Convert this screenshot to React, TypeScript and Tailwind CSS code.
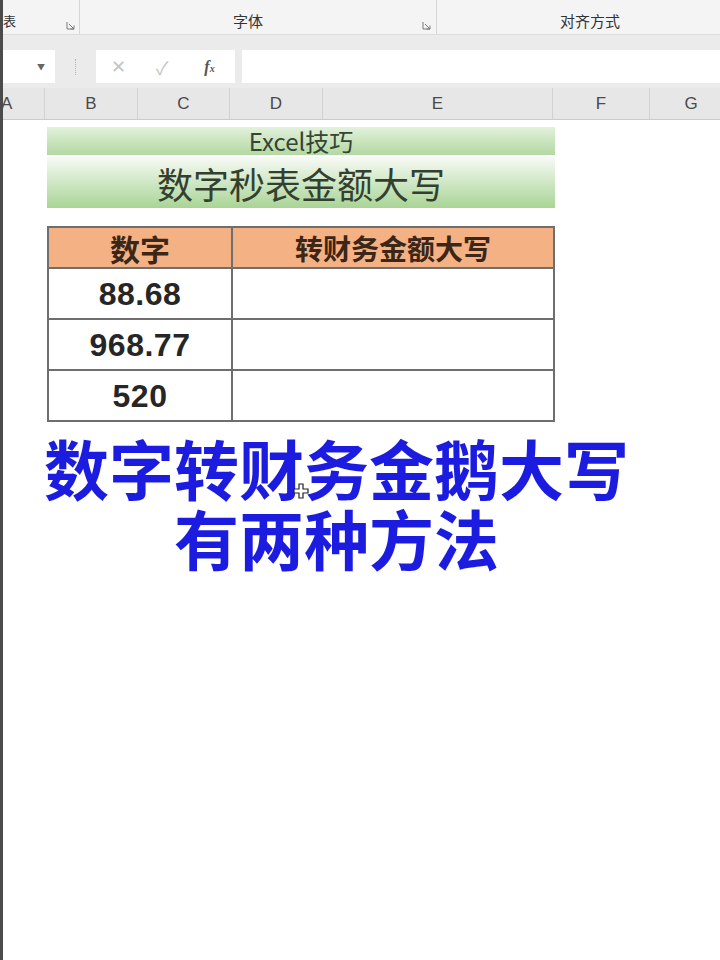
import React from "react";

const cjk = { fontFamily: '"Noto Sans CJK SC", "Noto Sans", sans-serif' };
const latin = { fontFamily: '"Liberation Sans", "Noto Sans CJK SC", sans-serif' };

const Launcher = () => (
  <svg width="9" height="9" viewBox="0 0 9 9" className="text-[#7a7a7a]">
    <path d="M1 1v7h7" fill="none" stroke="currentColor" strokeWidth="1" />
    <path d="M3 3l5 5M8 4.5V8H4.5" fill="none" stroke="currentColor" strokeWidth="1" />
  </svg>
);

const columns = [
  { label: "A", w: "w-[44px]", align: "justify-start -ml-[2px]" },
  { label: "B", w: "w-[93px]", align: "justify-center" },
  { label: "C", w: "w-[92px]", align: "justify-center" },
  { label: "D", w: "w-[93px]", align: "justify-center" },
  { label: "E", w: "w-[230px]", align: "justify-center" },
  { label: "F", w: "w-[97px]", align: "justify-center" },
  { label: "G", w: "w-[83px]", align: "justify-center" },
];

const rows = ["88.68", "968.77", "520"];

export default function App() {
  return (
    <div
      className="w-[720px] h-[960px] bg-white border-l-[3px] border-[#4b4b4b] overflow-hidden flex flex-col"
      style={cjk}
    >
      {/* ribbon group labels */}
      <div className="h-[35px] bg-[#f4f4f4] border-b border-[#dedede] flex shrink-0">
        <div className="w-[77px] border-r border-[#d6d6d6] flex items-end justify-between pb-[4px] pr-[4px]">
          <span className="text-[13px] leading-[18px] text-[#333]">表</span>
          <Launcher />
        </div>
        <div className="w-[357px] border-r border-[#d6d6d6] flex items-end justify-between pb-[4px] pr-[5px] pl-[153px]">
          <span className="text-[15px] leading-[18px] text-[#333]">字体</span>
          <Launcher />
        </div>
        <div className="flex-1 flex items-end pb-[4px] pl-[123px]">
          <span className="text-[15px] leading-[18px] text-[#333]">对齐方式</span>
        </div>
      </div>

      {/* formula bar */}
      <div className="h-[53px] bg-[#ebebeb] flex items-start pt-[15px] shrink-0">
        <div className="w-[52px] h-[33px] bg-white flex items-center justify-end pr-[10px]">
          <span className="text-[8px] text-[#666]">▼</span>
        </div>
        <div className="w-[41px] h-[33px] flex items-center justify-center">
          <div className="w-px h-[16px] border-l border-dotted border-[#b5b5b5]" />
        </div>
        <div className="w-[139px] h-[33px] bg-white flex items-center text-[#c4c4c4]">
          <span className="ml-[15px] text-[18px] leading-none" style={latin}>✕</span>
          <span className="ml-[30px] text-[18px] leading-none">✓</span>
          <span className="ml-[36px] text-[16px] italic font-bold text-[#555] leading-none" style={{ fontFamily: '"Liberation Serif", serif' }}>
            f<span className="text-[10px]">x</span>
          </span>
        </div>
        <div className="ml-[7px] flex-1 h-[33px] bg-white" />
      </div>

      {/* column headers */}
      <div className="h-[32px] bg-[#e7e7e7] border-b border-[#cbcbcb] flex shrink-0" style={latin}>
        {columns.map((c) => (
          <div
            key={c.label}
            className={`${c.w} shrink-0 flex items-center ${c.align} border-r border-[#d2d2d2] text-[17px] text-[#4a4a4a]`}
          >
            {c.label}
          </div>
        ))}
      </div>

      {/* sheet */}
      <div className="flex-1 relative">
        <div className="pl-[44px] pt-[7px]">
          <div className="w-[508px] flex flex-col gap-[2px]">
            <div className="h-[28px] bg-linear-to-b from-[#e2f1dc] to-[#b3d8a2] flex items-center justify-center">
              <span className="text-[24px] leading-none text-[#354433]">Excel技巧</span>
            </div>
            <div className="h-[51px] bg-linear-to-b from-[#f7faf5] to-[#a9d495] flex items-center justify-center">
              <span className="text-[36px] leading-none text-[#34402f]">数字秒表金额大写</span>
            </div>
          </div>

          <div className="w-[508px] mt-[18px] border-2 border-[#6e6e6e]">
            <div className="h-[39px] bg-[#f4b183] flex">
              <div className="w-[184px] border-r-2 border-[#6e6e6e] flex items-center justify-center">
                <span className="text-[30px] font-bold leading-none text-[#3b2618]">数字</span>
              </div>
              <div className="flex-1 flex items-center justify-center">
                <span className="text-[28px] font-bold leading-none text-[#3b2618]">转财务金额大写</span>
              </div>
            </div>
            {rows.map((r) => (
              <div key={r} className="h-[51px] border-t-2 border-[#6e6e6e] flex">
                <div className="w-[184px] border-r-2 border-[#6e6e6e] flex items-center justify-center">
                  <span className="text-[32px] font-bold tracking-[0.5px] leading-none text-[#262626]" style={latin}>
                    {r}
                  </span>
                </div>
                <div className="flex-1" />
              </div>
            ))}
          </div>
        </div>

        <div className="w-[667px] mt-[10px] text-center text-[65px] leading-[70px] font-bold text-[#1c1ce0] relative">
          <div className="h-[70px]">数字转财务金鹅大写</div>
          <div className="h-[70px]">有两种方法</div>
          <svg
            width="16"
            height="16"
            viewBox="0 0 16 16"
            className="absolute left-[290px] top-[51px]"
          >
            <path
              d="M6 1h4v5h5v4h-5v5H6v-5H1V6h5z"
              fill="#fff"
              stroke="#222"
              strokeWidth="1.2"
            />
          </svg>
        </div>
      </div>
    </div>
  );
}
